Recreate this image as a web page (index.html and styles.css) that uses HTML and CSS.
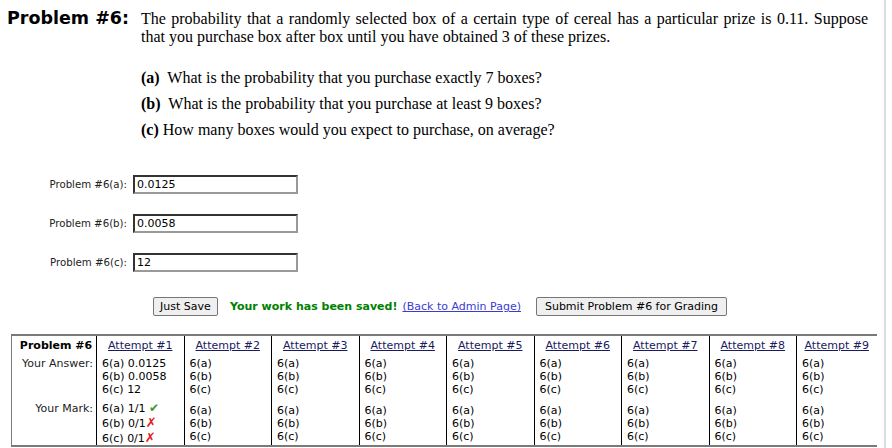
FILE: index.html
```html
<!DOCTYPE html>
<html>
<head>
<meta charset="utf-8">
<link rel="stylesheet" href="styles.css">
</head>
<body>
<div class="wrap">
  <div class="problem">
    <div class="ptitle">Problem #6:</div>
    <div class="pbody">
      <p class="ptext">The probability that a randomly selected box of a certain type of cereal has a particular prize is 0.11. Suppose that you purchase box after box until you have obtained 3 of these prizes.</p>
      <div class="questions">
        <div class="q"><b>(a)</b>&nbsp; What is the probability that you purchase exactly 7 boxes?</div>
        <div class="q"><b>(b)</b>&nbsp; What is the probability that you purchase at least 9 boxes?</div>
        <div class="q"><b>(c)</b> How many boxes would you expect to purchase, on average?</div>
      </div>
    </div>
  </div>

  <div class="answers">
    <label class="alabel">Problem #6(a):</label><input class="ainput" type="text" value="0.0125">
    <label class="alabel">Problem #6(b):</label><input class="ainput" type="text" value="0.0058">
    <label class="alabel">Problem #6(c):</label><input class="ainput" type="text" value="12">
  </div>

  <div class="actions">
    <button class="btn btn-save">Just Save</button>
    <span class="saved">Your work has been saved!</span>
    <a class="back" href="#">(Back to Admin Page)</a>
    <button class="btn btn-submit">Submit Problem #6 for Grading</button>
  </div>

  <table class="attempts">
    <colgroup>
      <col class="c0"><col class="ca"><col class="ca"><col class="ca"><col class="ca"><col class="ca"><col class="ca"><col class="ca"><col class="ca"><col class="cl">
    </colgroup>
    <tr class="head">
      <th class="rowlabel">Problem #6</th>
      <th><a href="#">Attempt #1</a></th>
      <th><a href="#">Attempt #2</a></th>
      <th><a href="#">Attempt #3</a></th>
      <th><a href="#">Attempt #4</a></th>
      <th><a href="#">Attempt #5</a></th>
      <th><a href="#">Attempt #6</a></th>
      <th><a href="#">Attempt #7</a></th>
      <th><a href="#">Attempt #8</a></th>
      <th><a href="#">Attempt #9</a></th>
    </tr>
    <tr class="ans">
      <td class="rowlabel">Your Answer:</td>
      <td>6(a) 0.0125<br>6(b) 0.0058<br>6(c) 12</td>
      <td>6(a)<br>6(b)<br>6(c)</td>
      <td>6(a)<br>6(b)<br>6(c)</td>
      <td>6(a)<br>6(b)<br>6(c)</td>
      <td>6(a)<br>6(b)<br>6(c)</td>
      <td>6(a)<br>6(b)<br>6(c)</td>
      <td>6(a)<br>6(b)<br>6(c)</td>
      <td>6(a)<br>6(b)<br>6(c)</td>
      <td>6(a)<br>6(b)<br>6(c)</td>
    </tr>
    <tr class="mark">
      <td class="rowlabel">Your Mark:</td>
      <td class="graded"><div>6(a) 1/1 <span class="ok">✔</span></div><div>6(b) 0/1<span class="bad">✗</span></div><div>6(c) 0/1<span class="bad">✗</span></div></td>
      <td class="ungraded">6(a)<br>6(b)<br>6(c)</td>
      <td class="ungraded">6(a)<br>6(b)<br>6(c)</td>
      <td class="ungraded">6(a)<br>6(b)<br>6(c)</td>
      <td class="ungraded">6(a)<br>6(b)<br>6(c)</td>
      <td class="ungraded">6(a)<br>6(b)<br>6(c)</td>
      <td class="ungraded">6(a)<br>6(b)<br>6(c)</td>
      <td class="ungraded">6(a)<br>6(b)<br>6(c)</td>
      <td class="ungraded">6(a)<br>6(b)<br>6(c)</td>
    </tr>
  </table>
</div>
</body>
</html>
```
FILE: styles.css
```css
html, body {
  margin: 0;
  padding: 0;
  background: #fff;
}
body {
  font-family: "DejaVu Sans", Verdana, sans-serif;
  color: #000;
}
.wrap {
  width: 884px;
  height: 448px;
  border-right: 2px solid #dcdcdc;
  overflow: hidden;
}
.problem {
  display: flex;
  align-items: baseline;
  padding-top: 8px;
}
.ptitle {
  width: 134px;
  padding-left: 7px;
  font-weight: bold;
  font-size: 17.5px;
  flex: none;
}
.pbody {
  width: 727px;
  font-family: "Liberation Serif", "Times New Roman", serif;
  font-size: 16px;
}
.ptext {
  margin: 0;
  line-height: 18px;
  text-align: justify;
}
.questions {
  margin-top: 19px;
}
.q {
  line-height: 26px;
}
.answers {
  display: grid;
  grid-template-columns: 127px 165px;
  column-gap: 6px;
  row-gap: 20px;
  align-items: center;
  margin-top: 32px;
}
.alabel {
  text-align: right;
  font-size: 10.2px;
  color: #222;
}
.ainput {
  box-sizing: border-box;
  height: 19px;
  width: 165px;
  margin: 0;
  padding: 0 2px;
  font-family: "DejaVu Sans", Verdana, sans-serif;
  font-size: 11px;
  color: #000;
  border-style: solid;
  border-width: 2px;
  border-color: #333 #999 #999 #333;
  background: #fff;
  outline: none;
}
.actions {
  display: flex;
  align-items: center;
  margin-top: 25px;
  padding-left: 153px;
  height: 19px;
  font-size: 11px;
}
.btn {
  box-sizing: border-box;
  height: 19px;
  padding: 0 6px;
  font-family: "DejaVu Sans", Verdana, sans-serif;
  font-size: 11px;
  color: #000;
  background: #efefef;
  border: 1px solid #767676;
  border-radius: 2px;
}
.btn-save {
  width: 65px;
}
.saved {
  margin-left: 12px;
  color: #008000;
  font-weight: bold;
}
.back {
  margin-left: 5px;
  color: #3b3bd0;
  text-decoration: underline;
}
.btn-submit {
  margin-left: 15px;
  width: 191px;
}
.attempts {
  margin-top: 18px;
  margin-left: 11px;
  width: 865px;
  table-layout: fixed;
  border-collapse: collapse;
  border-top: 2px solid #7a7a7a;
  border-left: 1px solid #7a7a7a;
  border-bottom: 2px solid #7a7a7a;
  font-size: 11px;
}
.c0 { width: 85px; }
.ca { width: 87.5px; }
.cl { width: 80px; }
.attempts th,
.attempts td {
  padding: 0 0 0 5px;
  border-left: 1px solid #000;
  text-align: left;
  vertical-align: top;
  font-weight: normal;
  line-height: 13px;
}
.attempts th.rowlabel,
.attempts td.rowlabel {
  border-left: none;
  text-align: right;
  padding: 0 3px 0 0;
  color: #222;
}
.attempts .head th {
  height: 18px;
  vertical-align: middle;
  text-align: center;
  padding: 0;
}
.attempts .head th.rowlabel {
  font-weight: bold;
  text-align: center;
  color: #000;
  padding-left: 4px;
}
.attempts th a {
  color: #1a1a60;
  text-decoration: underline;
}
.ans td {
  padding-top: 3px;
  padding-bottom: 6px;
}
.ans td.rowlabel {
  padding-top: 3px;
}
.mark td.rowlabel {
  padding-top: 0;
}
.graded div {
  height: 14.3px;
  line-height: 14px;
}
.ungraded {
  padding-top: 2px !important;
}
.ok {
  color: #3a9a2a;
  font-size: 12px;
  line-height: 1;
}
.bad {
  color: #e02020;
  font-size: 13px;
  line-height: 1;
}
```
